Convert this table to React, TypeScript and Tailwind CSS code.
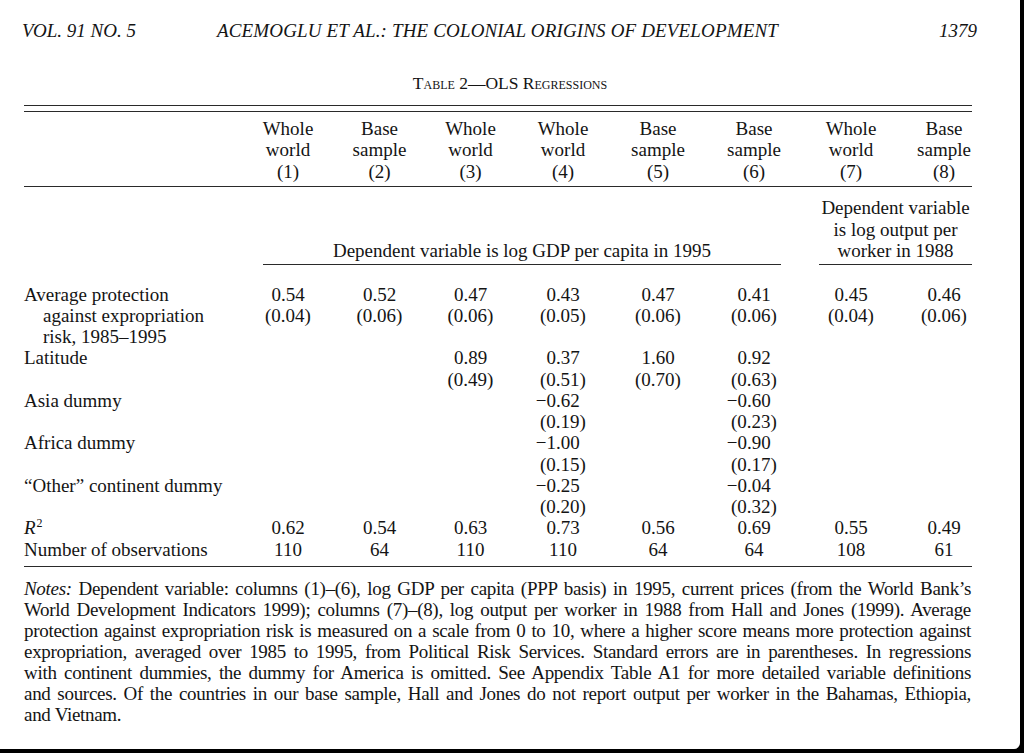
// App.tsx
const grid = "grid grid-cols-[218px_92px_91px_91px_94px_96px_96px_98px_72px]";

const heads: string[][] = [
  ["Whole", "world", "(1)"],
  ["Base", "sample", "(2)"],
  ["Whole", "world", "(3)"],
  ["Whole", "world", "(4)"],
  ["Base", "sample", "(5)"],
  ["Base", "sample", "(6)"],
  ["Whole", "world", "(7)"],
  ["Base", "sample", "(8)"],
];

type Row = { label: React.ReactNode[]; vals: (string[] | null)[] };

const rows: Row[] = [
  {
    label: ["Average protection", "against expropriation", "risk, 1985–1995"],
    vals: [
      ["0.54", "(0.04)"],
      ["0.52", "(0.06)"],
      ["0.47", "(0.06)"],
      ["0.43", "(0.05)"],
      ["0.47", "(0.06)"],
      ["0.41", "(0.06)"],
      ["0.45", "(0.04)"],
      ["0.46", "(0.06)"],
    ],
  },
  {
    label: ["Latitude"],
    vals: [null, null, ["0.89", "(0.49)"], ["0.37", "(0.51)"], ["1.60", "(0.70)"], ["0.92", "(0.63)"], null, null],
  },
  {
    label: ["Asia dummy"],
    vals: [null, null, null, ["−0.62", "(0.19)"], null, ["−0.60", "(0.23)"], null, null],
  },
  {
    label: ["Africa dummy"],
    vals: [null, null, null, ["−1.00", "(0.15)"], null, ["−0.90", "(0.17)"], null, null],
  },
  {
    label: ["“Other” continent dummy"],
    vals: [null, null, null, ["−0.25", "(0.20)"], null, ["−0.04", "(0.32)"], null, null],
  },
  {
    label: [
      <span key="r">
        <i>R</i>
        <sup className="text-[12px] -top-[7px] ml-[1px]">2</sup>
      </span>,
    ],
    vals: [["0.62"], ["0.54"], ["0.63"], ["0.73"], ["0.56"], ["0.69"], ["0.55"], ["0.49"]],
  },
  {
    label: ["Number of observations"],
    vals: [["110"], ["64"], ["110"], ["110"], ["64"], ["64"], ["108"], ["61"]],
  },
];

// line breaks as in the printed page
const notes: React.ReactNode[] = [
  <>
    <i>Notes:</i> Dependent variable: columns (1)–(6), log GDP per capita (PPP basis) in 1995, current prices (from
    the World Bank’s
  </>,
  "World Development Indicators 1999); columns (7)–(8), log output per worker in 1988 from Hall and Jones (1999). Average",
  "protection against expropriation risk is measured on a scale from 0 to 10, where a higher score means more protection against",
  "expropriation, averaged over 1985 to 1995, from Political Risk Services. Standard errors are in parentheses. In regressions",
  "with continent dummies, the dummy for America is omitted. See Appendix Table A1 for more detailed variable definitions",
  "and sources. Of the countries in our base sample, Hall and Jones do not report output per worker in the Bahamas, Ethiopia,",
  "and Vietnam.",
];

function Num({ v }: { v: string }) {
  // minus sign hangs to the left so the digits stay lined up
  if (v.startsWith("−")) {
    return (
      <span>
        <span className="inline-flex w-0 justify-end">−</span>
        {v.slice(1)}
      </span>
    );
  }
  return <span>{v}</span>;
}

export default function App() {
  return (
    <div className="min-h-screen bg-black">
      <div className="w-[1020px] h-[749px] bg-white rounded-br-[6px] pt-[20px] text-[#141414] font-['Liberation_Serif','Times_New_Roman',serif]">
        <div className="flex italic text-[19px] leading-[21px] pl-[22px] pr-[43px]">
          <span className="w-[195px]">VOL. 91 NO. 5</span>
          <span className="flex-1 tracking-[0.15px]">ACEMOGLU ET AL.: THE COLONIAL ORIGINS OF DEVELOPMENT</span>
          <span>1379</span>
        </div>

        <div className="mt-[32px] text-center text-[17.5px] leading-[21px] [font-variant:small-caps]">
          Table 2—OLS Regressions
        </div>

        <div className="ml-[24px] w-[948px] text-[19px] leading-[21.25px]">
          <div className="mt-[10.5px] h-[7px] border-y-[1.5px] border-[#2a2a2a]" />

          <div className={`${grid} pt-[6.5px] pb-[4px] border-b-[1.5px] border-[#2a2a2a]`}>
            <div />
            {heads.map((h, i) => (
              <div key={i} className={`text-center ${i === 7 ? "pl-[16px]" : ""}`}>
                {h.map((l) => (
                  <div key={l}>{l}</div>
                ))}
              </div>
            ))}
          </div>

          <div className={`${grid} pt-[10.5px]`}>
            <div />
            <div className="col-span-6 self-end mx-[21px] pb-[3px] border-b-[1.5px] border-[#2a2a2a] text-center">
              Dependent variable is log GDP per capita in 1995
            </div>
            <div className="col-span-2 ml-[17px] pb-[3px] border-b-[1.5px] border-[#2a2a2a] text-center">
              Dependent variable
              <br />
              is log output per
              <br />
              worker in 1988
            </div>
          </div>

          <div className="mt-[18.5px] pb-[6px] border-b-[1.5px] border-[#2a2a2a]">
            {rows.map((r, ri) => (
              <div key={ri} className={grid}>
                <div>
                  {r.label.map((l, li) => (
                    <div key={li} className={li > 0 ? "pl-[19px]" : ""}>
                      {l}
                    </div>
                  ))}
                </div>
                {r.vals.map((v, i) => (
                  <div key={i} className={`text-center ${i === 7 ? "pl-[16px]" : ""}`}>
                    {v &&
                      v.map((x, xi) => (
                        <div key={xi}>
                          <Num v={x} />
                        </div>
                      ))}
                  </div>
                ))}
              </div>
            ))}
          </div>

          <div className="mt-[11.5px] leading-[21px] w-[947px] tracking-[-0.3px]">
            {notes.map((n, i) => (
              <div
                key={i}
                className={
                  i < notes.length - 1 ? "whitespace-nowrap text-justify [text-align-last:justify]" : "whitespace-nowrap"
                }
              >
                {n}
              </div>
            ))}
          </div>
        </div>
      </div>
    </div>
  );
}
